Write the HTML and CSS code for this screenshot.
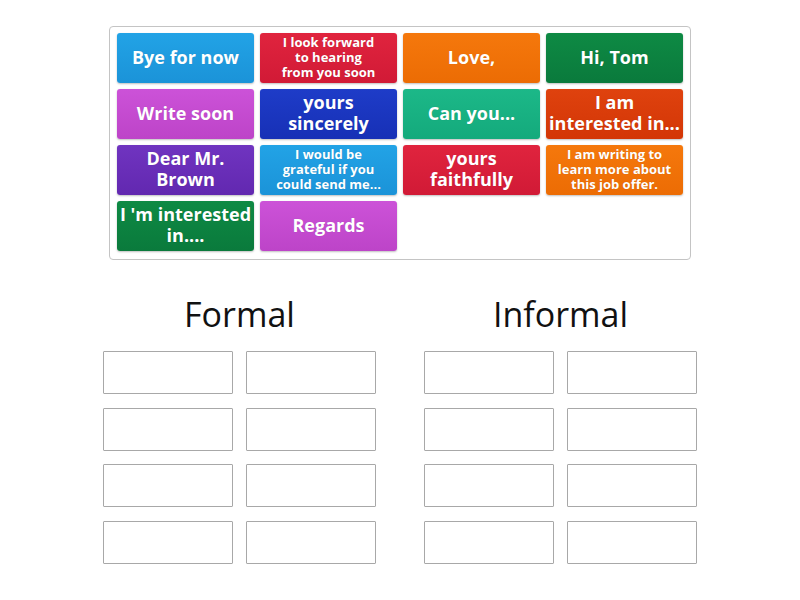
FILE: index.html
```html
<!DOCTYPE html>
<html>
<head>
<meta charset="utf-8">
<link rel="stylesheet" href="styles.css">
</head>
<body>
<div class="page">
  <div class="tray">
    <div class="card c-blue">Bye for now</div>
    <div class="card c-red small narrow">I look forward to hearing from you soon</div>
    <div class="card c-orange">Love,</div>
    <div class="card c-green">Hi, Tom</div>
    <div class="card c-magenta">Write soon</div>
    <div class="card c-navy">yours sincerely</div>
    <div class="card c-teal">Can you...</div>
    <div class="card c-rust">I am interested in...</div>
    <div class="card c-purple">Dear Mr. Brown</div>
    <div class="card c-blue small">I would be grateful if you could send me...</div>
    <div class="card c-red">yours faithfully</div>
    <div class="card c-orange small">I am writing to learn more about this job offer.</div>
    <div class="card c-green">I 'm interested in....</div>
    <div class="card c-magenta">Regards</div>
  </div>
  <div class="groups">
    <div class="group">
      <div class="title">Formal</div>
      <div class="slots">
        <div class="slot"></div><div class="slot"></div>
        <div class="slot"></div><div class="slot"></div>
        <div class="slot"></div><div class="slot"></div>
        <div class="slot"></div><div class="slot"></div>
      </div>
    </div>
    <div class="group">
      <div class="title">Informal</div>
      <div class="slots">
        <div class="slot"></div><div class="slot"></div>
        <div class="slot"></div><div class="slot"></div>
        <div class="slot"></div><div class="slot"></div>
        <div class="slot"></div><div class="slot"></div>
      </div>
    </div>
  </div>
</div>
</body>
</html>
```

FILE: styles.css
```css
html, body {
  margin: 0;
  padding: 0;
  background: #ffffff;
}
body {
  font-family: "Open Sans", "Noto Sans", sans-serif;
}
.page {
  width: 800px;
  height: 600px;
  padding-top: 26px;
  box-sizing: border-box;
}
.tray {
  margin-left: 109px;
  width: 582px;
  height: 234px;
  box-sizing: border-box;
  border: 1px solid #c4c4c4;
  border-radius: 4px;
  padding: 6px 6px 6px 7px;
  display: grid;
  grid-template-columns: repeat(4, 137px);
  grid-template-rows: repeat(4, 50px);
  column-gap: 6px;
  row-gap: 6px;
  align-content: start;
}
.card {
  border-radius: 3px;
  color: #ffffff;
  font-weight: 700;
  font-size: 18px;
  line-height: 21px;
  text-align: center;
  display: flex;
  align-items: center;
  justify-content: center;
  padding: 0 2px 2px;
  box-sizing: border-box;
  box-shadow: 0 1px 2px rgba(0,0,0,0.25);
  text-shadow: 0 0 1px rgba(0,0,0,0.15);
}
.card.small {
  font-size: 13px;
  line-height: 15px;
  padding: 0 10px 1px;
}
.card.small.narrow {
  padding: 0 18px 1px;
}
.c-blue { background: linear-gradient(#22a3e6, #1b93d8); }
.c-red { background: linear-gradient(#e0243e, #d11a36); }
.c-orange { background: linear-gradient(#f5780c, #ec6c04); }
.c-green { background: linear-gradient(#0e8a44, #0a7a3c); }
.c-magenta { background: linear-gradient(#cc52d8, #bd44c8); }
.c-navy { background: linear-gradient(#1e3cc8, #1730b6); }
.c-teal { background: linear-gradient(#1cb888, #14aa7c); }
.c-rust { background: linear-gradient(#df420e, #d33606); }
.c-purple { background: linear-gradient(#7034c0, #6228b0); }
.groups {
  display: flex;
  justify-content: center;
  gap: 48px;
  margin-top: 34px;
}
.group {
  width: 273px;
  display: flex;
  flex-direction: column;
  align-items: center;
}
.title {
  font-size: 34px;
  line-height: 40px;
  color: #111111;
  font-weight: 400;
}
.slots {
  margin-top: 17px;
  display: grid;
  grid-template-columns: repeat(2, 130px);
  grid-auto-rows: 43px;
  column-gap: 13px;
  row-gap: 13.5px;
}
.slot {
  border: 1px solid #a8a8a8;
  box-sizing: border-box;
  border-radius: 1px;
}
```
